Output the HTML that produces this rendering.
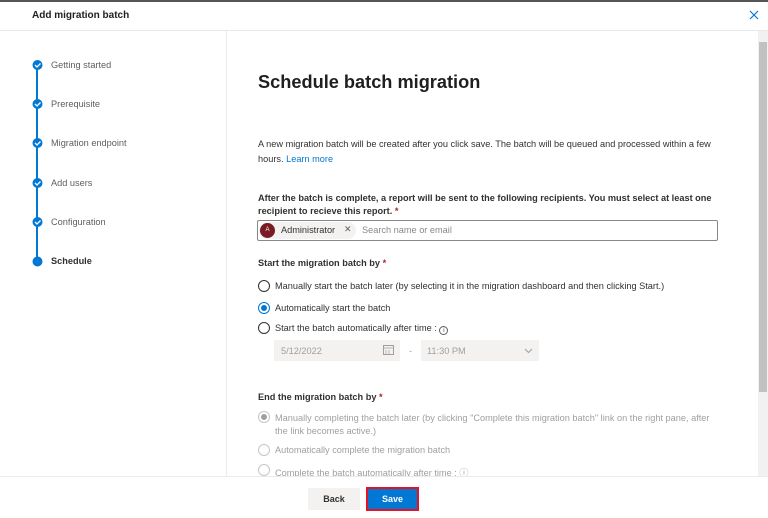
<!DOCTYPE html>
<html><head><style>
*{margin:0;padding:0;box-sizing:border-box}
body{width:768px;height:518px;overflow:hidden;background:#fff;font-family:"Liberation Sans",sans-serif;color:#323130;position:relative}
.a{position:absolute;white-space:nowrap}
.t{font-size:9.2px}
.r{position:absolute;width:12px;height:12px;border:1px solid #323130;border-radius:50%}
.req{color:#a4262c}
</style></head><body>
<div class="a" style="left:0;top:0;width:768px;height:2px;background:#555"></div>
<div class="a" style="left:0;top:30px;width:768px;height:1px;background:#e8e8e8"></div>
<div class="a" style="left:32px;top:10px;font-size:10px;font-weight:bold;color:#201f1e">Add migration batch</div>
<svg class="a" style="left:749px;top:10px" width="10" height="10"><path d="M1 1L9 9M9 1L1 9" stroke="#0078d4" stroke-width="1.2"/></svg>
<div class="a" style="left:226px;top:31px;width:1px;height:445px;background:#edebe9"></div>
<div class="a" style="left:36px;top:66px;width:2px;height:194px;background:#0078d4"></div>
<svg class="a" style="left:32px;top:60px" width="12" height="220">
<g fill="#0078d4"><circle cx="5.5" cy="5" r="5"/><circle cx="5.5" cy="44" r="5"/><circle cx="5.5" cy="83" r="5"/><circle cx="5.5" cy="123" r="5"/><circle cx="5.5" cy="162" r="5"/><circle cx="5.5" cy="201.5" r="5"/></g>
<g stroke="#fff" stroke-width="1.3" fill="none"><path d="M3 5l2 2 3.5-3.5"/><path d="M3 44l2 2 3.5-3.5"/><path d="M3 83l2 2 3.5-3.5"/><path d="M3 123l2 2 3.5-3.5"/><path d="M3 162l2 2 3.5-3.5"/></g></svg>
<div class="a t" style="left:51px;top:60px;color:#605e5c">Getting started</div>
<div class="a t" style="left:51px;top:99px;color:#605e5c">Prerequisite</div>
<div class="a t" style="left:51px;top:138px;color:#605e5c">Migration endpoint</div>
<div class="a t" style="left:51px;top:178px;color:#605e5c">Add users</div>
<div class="a t" style="left:51px;top:217px;color:#605e5c">Configuration</div>
<div class="a t" style="left:51px;top:256px;font-weight:bold">Schedule</div>

<div class="a" style="left:258px;top:72px;font-size:18.2px;font-weight:bold;color:#201f1e">Schedule batch migration</div>
<div class="a t" style="left:258px;top:137px;line-height:15px">A new migration batch will be created after you click save. The batch will be queued and processed within a few<br>hours. <span style="color:#0078d4">Learn more</span></div>
<div class="a t" style="left:258px;top:192px;line-height:13px;font-weight:bold">After the batch is complete, a report will be sent to the following recipients. You must select at least one<br>recipient to recieve this report. <span class="req">*</span></div>
<div class="a" style="left:257px;top:220px;width:461px;height:21px;border:1px solid #8a8886;border-radius:2px"></div>
<div class="a" style="left:259px;top:222px;width:97px;height:17px;background:#f3f2f1;border-radius:9px"></div>
<div class="a" style="left:260px;top:223px;width:15px;height:15px;border-radius:50%;background:#7a1b24;color:#fff;font-size:6px;text-align:center;line-height:15px">A</div>
<div class="a t" style="left:281px;top:225px">Administrator</div>
<div class="a t" style="left:344px;top:224px;color:#605e5c">✕</div>
<div class="a t" style="left:362px;top:225px;color:#8a8886">Search name or email</div>

<div class="a t" style="left:258px;top:258px;font-weight:bold">Start the migration batch by <span class="req">*</span></div>
<div class="r" style="left:258px;top:280px"></div><div class="a t" style="left:275px;top:281px">Manually start the batch later (by selecting it in the migration dashboard and then clicking Start.)</div>
<div class="r" style="left:258px;top:302px;border-color:#0078d4"><div style="position:absolute;left:2px;top:2px;width:6px;height:6px;border-radius:50%;background:#0078d4"></div></div><div class="a t" style="left:275px;top:303px">Automatically start the batch</div>
<div class="r" style="left:258px;top:322px"></div><div class="a t" style="left:275px;top:323px">Start the batch automatically after time : <span style="display:inline-block;width:9px;height:9px;border:1px solid #605e5c;border-radius:50%;font-size:6px;text-align:center;line-height:8px;vertical-align:-1px">i</span></div>
<div class="a" style="left:274px;top:340px;width:126px;height:21px;background:#f3f2f1"></div>
<div class="a t" style="left:281px;top:346px;color:#a19f9d">5/12/2022</div>
<svg class="a" style="left:383px;top:345px" width="11" height="10"><rect x="0.5" y="0.5" width="10" height="9" fill="none" stroke="#a19f9d"/><path d="M0 3h11M3 5v4M6 5v4" stroke="#a19f9d" stroke-width=".7"/></svg>
<div class="a t" style="left:409px;top:346px;color:#a19f9d">-</div>
<div class="a" style="left:421px;top:340px;width:118px;height:21px;background:#f3f2f1"></div>
<div class="a t" style="left:427px;top:346px;color:#a19f9d">11:30 PM</div>
<svg class="a" style="left:524px;top:348px" width="9" height="6"><path d="M1 1l3.5 3.5L8 1" fill="none" stroke="#a19f9d"/></svg>

<div class="a t" style="left:258px;top:392px;font-weight:bold">End the migration batch by <span class="req">*</span></div>
<div class="r" style="left:258px;top:411px;border-color:#c8c6c4"><div style="position:absolute;left:2px;top:2px;width:6px;height:6px;border-radius:50%;background:#a19f9d"></div></div>
<div class="a t" style="left:275px;top:412px;line-height:13px;color:#a19f9d">Manually completing the batch later (by clicking "Complete this migration batch" link on the right pane, after<br>the link becomes active.)</div>
<div class="r" style="left:258px;top:444px;border-color:#c8c6c4"></div><div class="a t" style="left:275px;top:445px;color:#a19f9d">Automatically complete the migration batch</div>
<div class="r" style="left:258px;top:464px;border-color:#c8c6c4"></div><div class="a t" style="left:275px;top:465px;color:#a19f9d">Complete the batch automatically after time : ⓘ</div>

<div class="a" style="left:758px;top:31px;width:10px;height:445px;background:#f1f1f1"></div>
<div class="a" style="left:759px;top:42px;width:8px;height:350px;background:#c1c1c1"></div>
<div class="a" style="left:0;top:476px;width:768px;height:42px;background:#fff;border-top:1px solid #edebe9"></div>
<div class="a" style="left:308px;top:488px;width:52px;height:22px;background:#f3f2f1;font-size:9px;font-weight:bold;text-align:center;line-height:22px">Back</div>
<div class="a" style="left:366px;top:487px;width:53px;height:24px;border:2px solid #e81123;background:#0078d4;color:#fff;font-size:9px;font-weight:bold;text-align:center;line-height:20px">Save</div>
</body></html>
